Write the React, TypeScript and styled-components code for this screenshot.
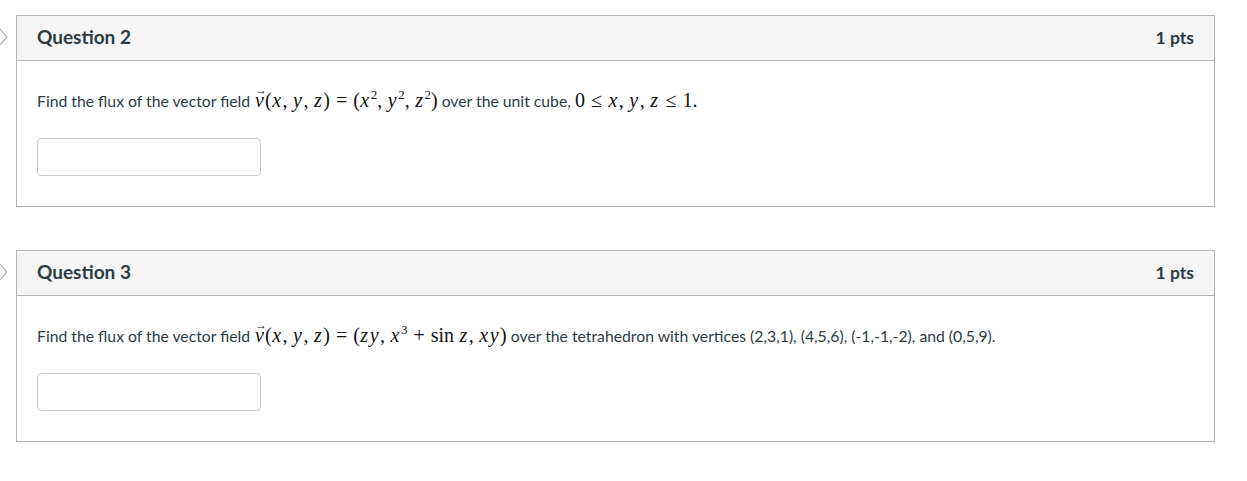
import React from "react";
import styled, { createGlobalStyle } from "styled-components";

const Global = createGlobalStyle`
  html, body { margin: 0; padding: 0; background: #fff; }
  body { font-family: Lato, "Open Sans", sans-serif; color: #2d3b45; }
`;

const Page = styled.div`
  padding-top: 15px;
  display: flex;
  flex-direction: column;
  gap: 43px;
  width: 1215px;
`;

const Row = styled.div`
  display: flex;
  align-items: flex-start;
`;

const Gutter = styled.div`
  width: 16px;
  flex: 0 0 16px;
  height: 45px;
  position: relative;
`;

const Flag = styled.svg`
  position: absolute;
  left: -8px;
  top: 13px;
`;

const Card = styled.div`
  flex: 1;
  border: 1px solid #b5b5b5;
  background: #fff;
`;

const Header = styled.div`
  height: 44px;
  background: #f5f5f5;
  border-bottom: 1px solid #b5b5b5;
  display: flex;
  align-items: center;
  justify-content: space-between;
  padding: 0 20px 0 20px;
`;

const Title = styled.div`
  font-size: 19px;
  font-weight: 700;
  color: #2d3b45;
  margin-top: -4px;
`;

const Points = styled.div`
  font-size: 17.5px;
  font-weight: 700;
  color: #2d3b45;
  margin-top: -2px;
`;

const Body = styled.div`
  padding: 29px 20px 30px 20px;
  display: flex;
  flex-direction: column;
  gap: 27px;
`;

const Text = styled.div`
  font-size: 15.75px;
  line-height: 21px;
  height: 21px;
  color: #2d3b45;
  white-space: nowrap;
`;

const MathSpan = styled.span`
  font-family: "Liberation Serif", "DejaVu Serif", serif;
  font-size: 20px;
  line-height: 10px;
  color: #111;
`;

const I = styled.span`
  font-style: italic;
  letter-spacing: 1.5px;
  padding-left: 0.5px;
`;

const Rel = styled.span`
  margin: 0 6px;
`;

const Comma = styled.span`
  margin-right: 5px;
`;

const Sup = styled.sup`
  font-size: 13px;
  font-style: normal;
  line-height: 0;
  vertical-align: 8px;
`;

const Vec = styled.span`
  position: relative;
  display: inline-block;
  font-style: italic;
  padding: 0 1px;
`;

const Arrow = styled.span`
  position: absolute;
  left: 1px;
  top: -10px;
  font-size: 12px;
  font-style: normal;
`;

const Input = styled.div`
  width: 222px;
  height: 36px;
  border: 1px solid #c7cdd1;
  border-radius: 4px;
  background: #fff;
`;

const FlagIcon = () => (
  <Flag width="16" height="18" viewBox="0 0 16 18">
    <path d="M1 1 L8 1 L15 9 L8 17 L1 17 Z" fill="none" stroke="#a9b6c2" strokeWidth="1.2" />
  </Flag>
);

const V = () => (
  <Vec>
    v<Arrow>→</Arrow>
  </Vec>
);

const C = () => <Comma>,</Comma>;

const Question = ({ title, children }: { title: string; children: React.ReactNode }) => (
  <Row>
    <Gutter>
      <FlagIcon />
    </Gutter>
    <Card>
      <Header>
        <Title>{title}</Title>
        <Points>1 pts</Points>
      </Header>
      <Body>
        <Text>{children}</Text>
        <Input />
      </Body>
    </Card>
  </Row>
);

export default function App() {
  return (
    <>
      <Global />
      <Page>
        <Question title="Question 2">
          Find the flux of the vector field{" "}
          <MathSpan>
            <V />(<I>x</I><C /><I>y</I><C /><I>z</I>)<Rel>=</Rel>(<I>x</I><Sup>2</Sup><C /><I>y</I><Sup>2</Sup><C /><I>z</I><Sup>2</Sup>)
          </MathSpan>{" "}
          over the unit cube,{" "}
          <MathSpan>
            0<Rel>≤</Rel><I>x</I><C /><I>y</I><C /><I>z</I><Rel>≤</Rel>1.
          </MathSpan>
        </Question>
        <Question title="Question 3">
          Find the flux of the vector field{" "}
          <MathSpan>
            <V />(<I>x</I><C /><I>y</I><C /><I>z</I>)<Rel>=</Rel>(<I>zy</I><C /><I>x</I><Sup>3</Sup><Rel>+</Rel>sin <I>z</I><C /><I>xy</I>)
          </MathSpan>{" "}
          over the tetrahedron with vertices (2,3,1), (4,5,6), (-1,-1,-2), and (0,5,9).
        </Question>
      </Page>
    </>
  );
}
